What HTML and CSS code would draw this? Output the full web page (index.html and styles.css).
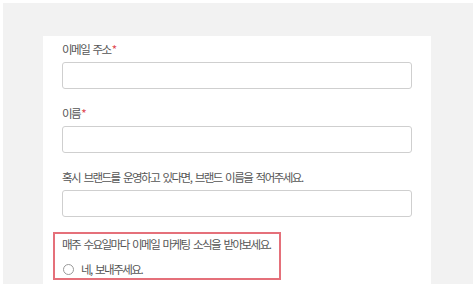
FILE: index.html
```html
<!DOCTYPE html>
<html lang="ko">
<head>
  <meta charset="utf-8">
  <title>뉴스레터 구독</title>
  <link rel="stylesheet" href="styles.css">
</head>
<body>
  <div class="page">
    <form class="card">
      <div class="field">
        <label class="label">이메일 주소<span class="req">*</span></label>
        <input class="input" type="text">
      </div>
      <div class="field">
        <label class="label">이름<span class="req">*</span></label>
        <input class="input" type="text">
      </div>
      <div class="field">
        <label class="label">혹시 브랜드를 운영하고 있다면, 브랜드 이름을 적어주세요.</label>
        <input class="input" type="text">
      </div>
      <div class="consent">
        <p class="label">매주 수요일마다 이메일 마케팅 소식을 받아보세요.</p>
        <label class="radio-row">
          <span class="radio"></span>
          <span class="label">네, 보내주세요.</span>
        </label>
      </div>
    </form>
  </div>
</body>
</html>
```

FILE: styles.css
```css
* {
  box-sizing: border-box;
}
html, body {
  margin: 0;
  height: 100%;
  background: #fff;
  overflow: hidden;
}
body {
  padding: 3px 1px 0 3px;
  font-family: "Noto Sans CJK KR", "Noto Sans", sans-serif;
  color: #555;
}
p {
  margin: 0;
}
.page {
  height: 100%;
  background: #f2f2f2;
  padding: 33px 0 0 40px;
}
.card {
  width: 388px;
  height: 100%;
  background: #fff;
  padding: 4px 19px 0 19px;
}
.field {
  display: flex;
  flex-direction: column;
  margin-bottom: 15px;
}
.label {
  font-size: 11.5px;
  line-height: 18px;
  letter-spacing: -1.5px;
  word-spacing: 1.5px;
  color: #555;
}
.req {
  color: #e0454f;
  margin-left: 1px;
}
.field .label {
  margin-bottom: 4px;
}
.input {
  width: 350px;
  height: 27px;
  border: 1px solid #cfcfcf;
  border-radius: 3px;
  background: #fff;
  outline: none;
}
.consent {
  width: fit-content;
  margin: 10px 0 0 -9px;
  border: 2px solid #e5707a;
  padding: 1px 8px 0 7px;
}
.radio-row {
  display: flex;
  align-items: center;
  gap: 7px;
  margin-top: 7px;
}
.radio {
  width: 11px;
  height: 11px;
  border: 1px solid #999;
  border-radius: 50%;
  margin-left: 1px;
}
```
